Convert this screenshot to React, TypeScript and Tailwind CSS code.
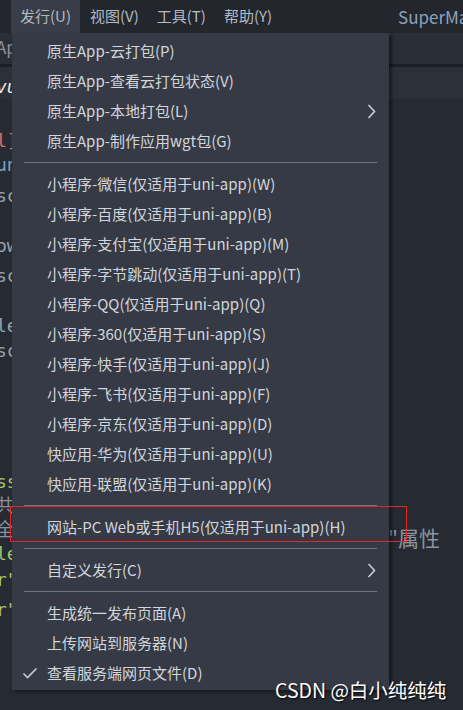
import React from "react";

type Item =
  | { type: "item"; label: string; sub?: boolean; check?: boolean }
  | { type: "sep" };

const items: Item[] = [
  { type: "item", label: "原生App-云打包(P)" },
  { type: "item", label: "原生App-查看云打包状态(V)" },
  { type: "item", label: "原生App-本地打包(L)", sub: true },
  { type: "item", label: "原生App-制作应用wgt包(G)" },
  { type: "sep" },
  { type: "item", label: "小程序-微信(仅适用于uni-app)(W)" },
  { type: "item", label: "小程序-百度(仅适用于uni-app)(B)" },
  { type: "item", label: "小程序-支付宝(仅适用于uni-app)(M)" },
  { type: "item", label: "小程序-字节跳动(仅适用于uni-app)(T)" },
  { type: "item", label: "小程序-QQ(仅适用于uni-app)(Q)" },
  { type: "item", label: "小程序-360(仅适用于uni-app)(S)" },
  { type: "item", label: "小程序-快手(仅适用于uni-app)(J)" },
  { type: "item", label: "小程序-飞书(仅适用于uni-app)(F)" },
  { type: "item", label: "小程序-京东(仅适用于uni-app)(D)" },
  { type: "item", label: "快应用-华为(仅适用于uni-app)(U)" },
  { type: "item", label: "快应用-联盟(仅适用于uni-app)(K)" },
  { type: "sep" },
  { type: "item", label: "网站-PC Web或手机H5(仅适用于uni-app)(H)" },
  { type: "sep" },
  { type: "item", label: "自定义发行(C)", sub: true },
  { type: "sep" },
  { type: "item", label: "生成统一发布页面(A)" },
  { type: "item", label: "上传网站到服务器(N)" },
  { type: "item", label: "查看服务端网页文件(D)", check: true },
];

const codeLines: { t: string; c: string; h: number; it?: boolean }[] = [
  { t: "", c: "", h: 11 },
  { t: "vu", c: "text-[#e8e8e8]", h: 54, it: true },
  { t: "l]", c: "text-[#e06c75]", h: 24 },
  { t: "un", c: "text-[#7aa6c8]", h: 31 },
  { t: "sc", c: "text-[#9aa3ad]", h: 50 },
  { t: "ow", c: "text-[#9aa3ad]", h: 30 },
  { t: "sc", c: "text-[#9aa3ad]", h: 50 },
  { t: "le", c: "text-[#9aa3ad]", h: 25 },
  { t: "sc", c: "text-[#9aa3ad]", h: 131 },
  { t: "ss", c: "text-[#a6c46a]", h: 24 },
  { t: "共", c: "text-[#8a929c]", h: 24 },
  { t: "全", c: "text-[#8a929c]", h: 24 },
  { t: "le", c: "text-[#a6c46a]", h: 26 },
  { t: "r\"", c: "text-[#a6c46a]", h: 30 },
  { t: "r\"", c: "text-[#a6c46a]", h: 30 },
];

function Check() {
  return (
    <svg width="16" height="12" viewBox="0 0 16 12" fill="none">
      <path d="M1.5 6.5 L5.5 10.5 L14.5 1.5" stroke="#c9cdd3" strokeWidth="1.6" />
    </svg>
  );
}

function Arrow() {
  return (
    <svg width="9" height="15" viewBox="0 0 9 15" fill="none">
      <path d="M1.5 1 L7.5 7.5 L1.5 14" stroke="#c9cdd3" strokeWidth="1.6" />
    </svg>
  );
}

export default function App() {
  const font = { fontFamily: '"Noto Sans CJK SC", "Noto Sans", sans-serif' };
  return (
    <div
      className="relative w-[463px] h-[710px] overflow-hidden bg-[#262a32] text-[#cfd3d9]"
      style={font}
    >
      {/* menubar */}
      <div className="flex h-[33px] items-stretch bg-[#23262d] text-[15px]">
        <div className="w-[11px] flex items-center text-[#c8a060] text-[13px] overflow-hidden">
          <span className="-ml-[4px]">)</span>
        </div>
        <div className="flex items-center px-[9px] bg-[#383d48] text-[#b3bac4]">发行(U)</div>
        <div className="flex items-center px-[9px] ml-[1px] text-[#b3bac4]">视图(V)</div>
        <div className="flex items-center px-[9px] text-[#b3bac4]">工具(T)</div>
        <div className="flex items-center px-[9px] text-[#b3bac4]">帮助(Y)</div>
        <div className="flex-1" />
        <div className="flex items-center pr-0 text-[#8da3bf] text-[17px] whitespace-nowrap w-[65px] overflow-hidden">
          SuperMa
        </div>
      </div>

      {/* tab bar area */}
      <div className="h-[34px] bg-[#2a2e36] border-b-[3px] border-[#1c1f24] flex items-end">
        <div className="w-[12px] text-[17px] text-[#8a929c] leading-[34px] overflow-hidden whitespace-nowrap">
          <span className="-ml-[4px]">Ap</span>
        </div>
      </div>
      <div className="h-[32px] bg-[#2c3038]" />

      {/* editor area with code fragments */}
      <div
        className="absolute left-0 top-[67px] w-[12px] flex flex-col text-[18px] overflow-hidden"
        style={{ fontFamily: '"DejaVu Sans Mono", "Noto Sans CJK SC", monospace' }}
      >
        {codeLines.map((l, i) => (
          <div
            key={i}
            className={`whitespace-nowrap leading-none ${l.c} ${l.it ? "italic" : ""}`}
            style={{ height: l.h }}
          >
            <span className="-ml-[4px] inline-block">{l.t}</span>
          </div>
        ))}
      </div>

      <div className="absolute left-[388px] top-[522px] text-[21px] text-[#8b939e] whitespace-nowrap">
        "属性
      </div>

      {/* dropdown */}
      <div className="absolute left-[12px] top-[33px] w-[377px] bg-[#353a45] pt-[3px] pb-[2px] shadow-[3px_2px_3px_rgba(0,0,0,0.45)]">
        {items.map((it, i) =>
          it.type === "sep" ? (
            <div key={i} className="h-[13px] flex items-center px-[12px]">
              <div className="h-[1px] w-full bg-[#6f747c]" />
            </div>
          ) : (
            <div key={i} className="h-[30px] flex items-center text-[15px] text-[#d2d6dc]">
              <div className="w-[35px] flex justify-center pl-[1px]">{it.check ? <Check /> : null}</div>
              <div className="flex-1 whitespace-nowrap">{it.label}</div>
              <div className="w-[22px] pr-[13px] flex justify-end">{it.sub ? <Arrow /> : null}</div>
            </div>
          )
        )}
      </div>

      {/* red highlight box */}
      <div className="absolute left-[10px] top-[506px] w-[397px] h-[36px] border-[1.5px] border-[#e3262a]" />

      {/* watermark */}
      <div
        className="absolute left-[275px] top-[675px] text-[19.5px] text-white whitespace-nowrap"
        style={{ textShadow: "1px 1px 2px rgba(0,0,0,0.9)" }}
      >
        CSDN @白小纯纯纯
      </div>
    </div>
  );
}
